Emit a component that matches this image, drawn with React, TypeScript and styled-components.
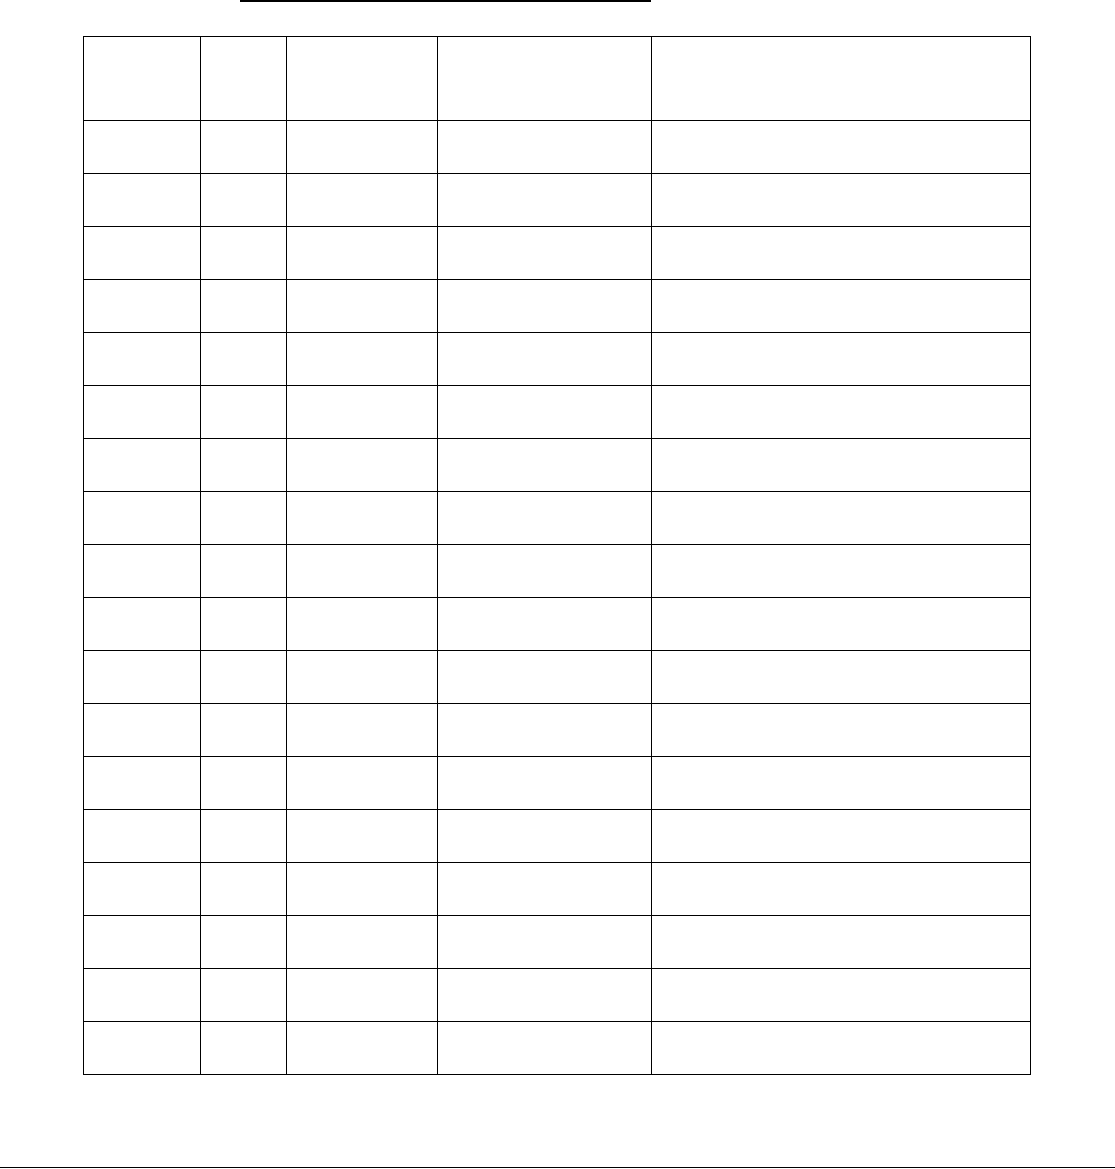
import styled, { createGlobalStyle } from "styled-components";

const GlobalStyle = createGlobalStyle`
  html, body {
    margin: 0;
    padding: 0;
    background: #fff;
    font-family: "Liberation Serif", "Times New Roman", serif;
  }
`;

const columns = [117, 86, 151, 214, 379];
const bodyRows = 18;

const App = () => {
  return (
    <Page>
      <GlobalStyle />
      <TitleRule />
      <Sheet>
        <colgroup>
          {columns.map((w, i) => (
            <col key={i} style={{ width: w }} />
          ))}
        </colgroup>
        <thead>
          <HeadRow>
            {columns.map((_, i) => (
              <Cell key={i} />
            ))}
          </HeadRow>
        </thead>
        <tbody>
          {Array.from({ length: bodyRows }).map((_, r) => (
            <BodyRow key={r}>
              {columns.map((_, i) => (
                <Cell key={i} />
              ))}
            </BodyRow>
          ))}
        </tbody>
      </Sheet>
      <FooterRule />
    </Page>
  );
};
export default App;

const Page = styled.div`
  width: 1115px;
  height: 1169px;
  display: flex;
  flex-direction: column;
  box-sizing: border-box;
  padding-bottom: 1px;
`;

const TitleRule = styled.div`
  margin-left: 240px;
  width: 411px;
  height: 2px;
  background: #000;
`;

const Sheet = styled.table`
  margin-top: 34px;
  margin-left: 83px;
  width: 948px;
  border-collapse: collapse;
  table-layout: fixed;
`;

const HeadRow = styled.tr`
  height: 84px;
`;

const BodyRow = styled.tr`
  height: 53px;
`;

const Cell = styled.td`
  border: 1px solid #000;
  padding: 0;
`;

const FooterRule = styled.div`
  margin-top: auto;
  width: 100%;
  height: 1px;
  background: #000;
`;
